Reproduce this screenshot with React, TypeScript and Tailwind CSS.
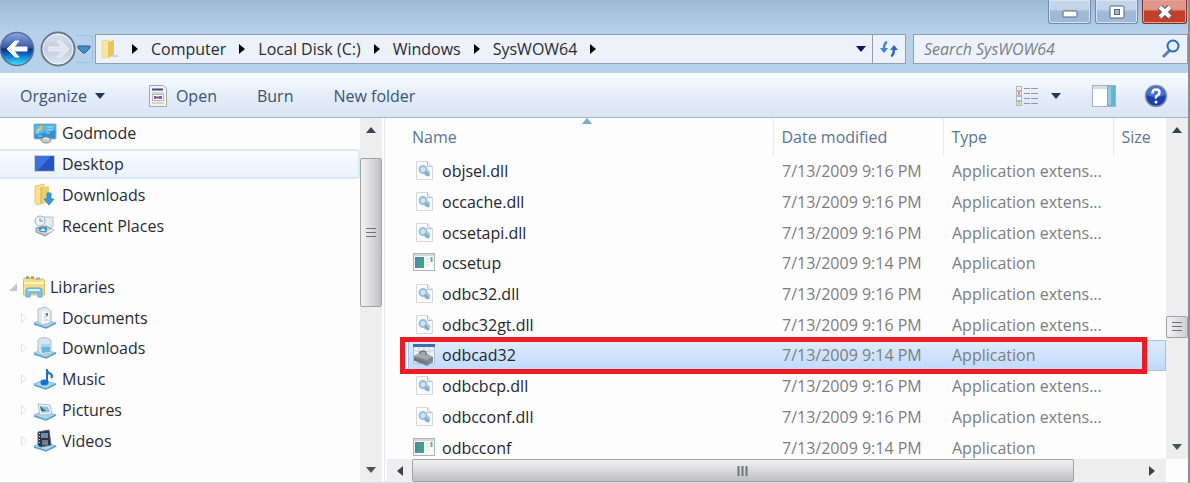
import type { ReactNode } from "react";

const crumbs = ["Computer", "Local Disk (C:)", "Windows", "SysWOW64"];

const favorites = [
  { name: "Godmode", icon: <GodmodeIcon /> },
  { name: "Desktop", icon: <DesktopIcon />, active: true },
  { name: "Downloads", icon: <DownloadFolderIcon /> },
  { name: "Recent Places", icon: <RecentIcon /> },
];

const libraries = [
  { name: "Documents", icon: <DocumentsIcon /> },
  { name: "Downloads", icon: <LibraryDownloadsIcon /> },
  { name: "Music", icon: <MusicIcon /> },
  { name: "Pictures", icon: <PicturesIcon /> },
  { name: "Videos", icon: <VideosIcon /> },
];

const files = [
  { name: "objsel.dll", date: "7/13/2009 9:16 PM", kind: "dll" },
  { name: "occache.dll", date: "7/13/2009 9:16 PM", kind: "dll" },
  { name: "ocsetapi.dll", date: "7/13/2009 9:16 PM", kind: "dll" },
  { name: "ocsetup", date: "7/13/2009 9:14 PM", kind: "exe" },
  { name: "odbc32.dll", date: "7/13/2009 9:16 PM", kind: "dll" },
  { name: "odbc32gt.dll", date: "7/13/2009 9:16 PM", kind: "dll" },
  { name: "odbcad32", date: "7/13/2009 9:14 PM", kind: "odbc", selected: true },
  { name: "odbcbcp.dll", date: "7/13/2009 9:16 PM", kind: "dll" },
  { name: "odbcconf.dll", date: "7/13/2009 9:16 PM", kind: "dll" },
  { name: "odbcconf", date: "7/13/2009 9:14 PM", kind: "exe" },
];

function Triangle({
  dir,
  className,
}: {
  dir: "up" | "down" | "left" | "right";
  className?: string;
}) {
  const box = {
    up: "0 0 10 6",
    down: "0 0 10 6",
    left: "0 0 6 10",
    right: "0 0 6 10",
  };
  const d = {
    up: "M0 6 5 0l5 6z",
    down: "M0 0h10L5 6z",
    left: "M6 0v10L0 5z",
    right: "M0 0v10l6-5z",
  };
  const size = dir === "up" || dir === "down" ? "h-[6px] w-[10px]" : "h-[10px] w-[6px]";
  return (
    <svg viewBox={box[dir]} className={`${size} shrink-0 ${className ?? ""}`} fill="currentColor">
      <path d={d[dir]} />
    </svg>
  );
}

function GodmodeIcon() {
  return (
    <svg viewBox="0 0 24 24" className="size-6">
      <rect x="1" y="3" width="22" height="15" rx="1" fill="#2f8fd0" stroke="#8abadd" />
      <path d="M2 4h20v5L2 14z" fill="#5db4e6" />
      <path d="M5 13a3 3 0 1 1 4-4l-3 1z" fill="#bcd9a0" />
      <circle cx="8" cy="6.500" r="2" fill="#f3b83e" />
      <path d="M14 6h6M14 9h6M13 12h4M5 15h4" stroke="#a9dcf4" />
      <ellipse cx="13" cy="19" rx="5" ry="3" fill="#c4c9ce" stroke="#858e97" />
      <path d="M10 18q3-3 6 0z" fill="#eef0f2" />
    </svg>
  );
}

function DesktopIcon() {
  return (
    <svg viewBox="0 0 24 24" className="size-6">
      <rect x="1" y="3" width="21" height="17" fill="#c5cedb" />
      <rect x="2" y="4" width="19" height="14" fill="#2354c4" />
      <path d="M2 4h16L5 18H2z" fill="#3f72dc" />
      <path d="M2 18.500h19" stroke="#5a6a86" />
    </svg>
  );
}

function DownloadFolderIcon() {
  return (
    <svg viewBox="0 0 24 24" className="size-6">
      <path d="M2 3 11 1v19l-7 2-2-2z" fill="#f8e292" stroke="#e6c974" />
      <path d="M8 4l8-1v16l-8 2z" fill="#edcf70" />
      <path d="M8 4v17" stroke="#d4ae52" />
      <path d="M14 10h4v6h3l-5 6-5-6h3z" fill="#2d9be0" stroke="#3b8cc4" />
    </svg>
  );
}

function RecentIcon() {
  return (
    <svg viewBox="0 0 24 24" className="size-6">
      <path d="M9 3h11v9l-3 4H8z" fill="#e3ecf2" stroke="#b3c0ca" />
      <circle cx="7" cy="7" r="5" fill="#eef3f6" stroke="#a3b0bb" />
      <path d="M7 4v3h3" fill="none" stroke="#7c8e9e" />
      <path d="M3 14l10-2 8 4-9 6-9-4z" fill="#c2c9cf" stroke="#8a959e" />
      <path d="M5 13h9v5H7z" fill="#4b93bd" />
      <path d="M7 17l3-3 3 3z" fill="#d4f1f5" />
      <path d="M14 18l6-2" stroke="#eef2f4" strokeWidth="2" />
    </svg>
  );
}

function LibrariesIcon() {
  return (
    <svg viewBox="0 0 24 24" className="size-6">
      <path d="M1.500 5q0-2 2-2h6l2 1h9q2 0 2 2v14h-21z" fill="#f4dc88" stroke="#dcbc66" />
      <path d="M2 8h20" stroke="#fff3b8" strokeWidth="2" />
      <path d="M4 2.500h3" stroke="#5fae5c" strokeWidth="2" />
      <path d="M9 2.500h3" stroke="#d96a5d" strokeWidth="2" />
      <path d="M14 3.500h4" stroke="#7fb0da" strokeWidth="2" />
      <path d="M4 22v-7q0-2 2-2h12q2 0 2 2v7h-4v-4H8v4z" fill="#7cc5ea" stroke="#62abd3" />
      <path d="M6 15h12" stroke="#d6f2ff" strokeWidth="2" />
    </svg>
  );
}

function LibraryBase({ children }: { children: ReactNode }) {
  return (
    <svg viewBox="0 0 24 24" className="size-6">
      <path d="M1 17l9-4 13 4-10 5z" fill="#a5d8f2" stroke="#84bfdf" />
      <path d="M1 18l12 4 10-5" fill="none" stroke="#5ba3cc" strokeWidth="1.500" />
      {children}
    </svg>
  );
}

function DocumentsIcon() {
  return (
    <LibraryBase>
      <path d="M5 3l8-2 5 4v12l-9 2-4-3z" fill="#e3e9ef" stroke="#b3bfca" />
      <path d="M9 5l7 1v10l-7 2z" fill="#f8fafc" />
      <path d="M11 8h4M11 11h3M11 14h4" stroke="#b3c0cf" />
      <rect x="13" y="7" width="2" height="3" fill="#478fc5" />
    </LibraryBase>
  );
}

function LibraryDownloadsIcon() {
  return (
    <LibraryBase>
      <path d="M5 4q5-5 13 0v13l-9 2-4-3z" fill="#dae4ec" stroke="#b0bdc9" />
      <path d="M8 8h9v8l-8 1z" fill="#6ab6e2" />
      <path d="M8 8h9v3H8z" fill="#a4d8f1" />
    </LibraryBase>
  );
}

function MusicIcon() {
  return (
    <LibraryBase>
      <ellipse cx="11.500" cy="15.500" rx="4" ry="3" fill="#1a72c8" />
      <path d="M14 16V2q0 4 4 5 2 2 0 4" fill="none" stroke="#1a72c8" strokeWidth="2" />
    </LibraryBase>
  );
}

function PicturesIcon() {
  return (
    <LibraryBase>
      <path d="M5 6l12 1 2 9-12 1z" fill="#f0f5f9" stroke="#aebecc" />
      <path d="M7 8l8 1 2 5-8 1z" fill="#8fc1dc" />
      <path d="M8 13l-1-5 6 5z" fill="#2d7d66" />
    </LibraryBase>
  );
}

function VideosIcon() {
  return (
    <LibraryBase>
      <path d="M5 3l11-2 2 15-11 2-2-2z" fill="#283447" stroke="#59687a" />
      <path d="M8 4h7v5H8z" fill="#5a94bb" />
      <path d="M9 11h6v5H9z" fill="#4a83ac" />
      <path d="M9 8h4M11 14h4" stroke="#c86c3e" strokeWidth="2" />
      <path d="M6.500 4v12" stroke="#d6dde4" strokeDasharray="1 2" />
    </LibraryBase>
  );
}

function FileIcon({ kind }: { kind: string }) {
  if (kind === "exe") {
    return (
      <svg viewBox="0 0 24 24" className="size-6 shrink-0">
        <rect x="1.500" y="2.500" width="21" height="17" fill="#f6f7f8" stroke="#aeb4b9" />
        <path d="M2 4h20" stroke="#d3d8dc" strokeWidth="2" />
        <rect x="3" y="6" width="9" height="11" fill="#4a86b4" />
        <path d="M6 7h6v10H5z" fill="#45a07e" />
        <path d="M14 8h3M14 11h3M14 14h3" stroke="#d6dadd" />
        <path d="M19.500 6v5" stroke="#6fae94" strokeWidth="2" />
      </svg>
    );
  }
  if (kind === "odbc") {
    return (
      <svg viewBox="0 0 24 24" className="size-6 shrink-0">
        <rect x="1.500" y="1.500" width="21" height="19" fill="#eef2f7" stroke="#b3bfce" />
        <path d="M1 2.500h22" stroke="#3a6cbb" strokeWidth="3" />
        <path d="M7 4v8M12 4v8M17 4v8M2 8h20" stroke="#c5d0de" />
        <path d="M2 13l8-4 3 1 8 4v5l-6 4-13-5z" fill="#7e868e" />
        <path d="M2 13l8-4 10 5-5 3z" fill="#a2a9b0" />
        <path d="M8 11V9l3-1 3 1v3" fill="none" stroke="#71797f" strokeWidth="1.500" />
        <path d="M2 16l13 4" stroke="#5f676e" />
      </svg>
    );
  }
  return (
    <svg viewBox="0 0 24 24" className="size-6 shrink-0">
      <path d="M4.500 2.500h11l5 5v13h-16z" fill="#fafbfc" stroke="#d3d8dc" />
      <path d="M15.500 2.500v5h5" fill="#edf0f2" stroke="#b9c1c8" />
      <circle cx="11" cy="10.500" r="3.500" fill="#d3e6f3" stroke="#9bbfda" strokeWidth="2" />
      <circle cx="15" cy="14" r="3" fill="#a3c3db" />
      <path d="M13 13l4 4" stroke="#7ea6c6" strokeWidth="2" />
    </svg>
  );
}

function TitleBar() {
  return (
    <div className="flex h-6 justify-end gap-1 pr-px">
      <button
        aria-label="Minimize"
        className="flex w-[43px] items-center justify-center rounded-b-[3px] border border-t-0 border-[#6f8bad] bg-linear-to-b from-[#c3d5e9] from-40% to-[#9fb9d6] to-50% pt-1 shadow-[inset_0_0_0_1px_#d5e3f2]"
      >
        <svg viewBox="0 0 16 8" className="h-2 w-4">
          <rect x="1" y="1" width="14" height="6" rx="1" fill="#fff" stroke="#5c6370" />
        </svg>
      </button>
      <button
        aria-label="Maximize"
        className="flex w-[43px] items-center justify-center rounded-b-[3px] border border-t-0 border-[#6f8bad] bg-linear-to-b from-[#c3d5e9] from-40% to-[#9fb9d6] to-50% shadow-[inset_0_0_0_1px_#d5e3f2]"
      >
        <svg viewBox="0 0 16 14" className="h-[14px] w-4">
          <rect x="1" y="1" width="14" height="12" rx="1" fill="#fff" stroke="#5c6370" />
          <rect x="5.500" y="4.500" width="5" height="5" fill="#9eb8d4" stroke="#5c6370" />
        </svg>
      </button>
      <button
        aria-label="Close"
        className="flex w-[45px] items-center justify-center rounded-b-[3px] border border-t-0 border-[#7c2f2b] bg-linear-to-b from-[#e0978a] from-40% to-[#c0402b] to-50% shadow-[inset_0_0_0_1px_#e3a498]"
      >
        <svg viewBox="0 0 16 14" className="h-[14px] w-4">
          <path d="M3 2l10 10M13 2L3 12" stroke="#5e4a52" strokeWidth="6" />
          <path d="M3 2l10 10M13 2L3 12" stroke="#fff" strokeWidth="4" />
        </svg>
      </button>
    </div>
  );
}

function NavButtons() {
  return (
    <div className="flex h-9 shrink-0 items-center">
      <button aria-label="Back" className="size-9">
        <svg viewBox="0 0 36 36" className="size-9">
          <defs>
            <linearGradient id="back" x2="0" y2="1">
              <stop offset="0" stopColor="#8fa9e0" />
              <stop offset="0.450" stopColor="#3659ad" />
              <stop offset="0.500" stopColor="#0b2c86" />
              <stop offset="0.700" stopColor="#1476c8" />
              <stop offset="1" stopColor="#3ce8fb" />
            </linearGradient>
          </defs>
          <circle cx="17" cy="18" r="16.500" fill="url(#back)" stroke="#5a7196" strokeWidth="1.500" />
          <path
            d="M7 18l8-8h4l-5 6h13v4H14l5 6h-4z"
            fill="#fff"
            stroke="#fff"
            strokeLinejoin="round"
          />
        </svg>
      </button>
      <button aria-label="Forward" className="ml-1 size-9">
        <svg viewBox="0 0 36 36" className="size-9">
          <defs>
            <linearGradient id="fwd" x2="0" y2="1">
              <stop offset="0" stopColor="#d9e3ee" />
              <stop offset="0.500" stopColor="#bfcddd" />
              <stop offset="1" stopColor="#dce9f5" />
            </linearGradient>
          </defs>
          <circle cx="18" cy="18" r="16.500" fill="url(#fwd)" stroke="#6b7787" strokeWidth="2" />
          <circle cx="18" cy="18" r="15" fill="none" stroke="#eef3f8" />
          <path
            d="M29 18l-8-8h-4l5 6H9v4h13l-5 6h4z"
            fill="#dde6ef"
            stroke="#eaf0f6"
            strokeLinejoin="round"
          />
        </svg>
      </button>
      <button
        aria-label="Recent pages"
        className="flex h-7 w-[17px] items-center justify-center rounded-r-[3px] border border-l-0 border-[#a5bfdb]"
      >
        <svg viewBox="0 0 14 10" className="h-[10px] w-[14px] shrink-0">
          <path d="M1 2h12v2l-5 5H6L1 4z" fill="#3f8fc8" stroke="#2b5a8c" />
        </svg>
      </button>
    </div>
  );
}

function AddressBar() {
  return (
    <div className="mt-[7px] flex items-center">
      <NavButtons />
      <nav
        aria-label="Address"
        className="ml-[2px] flex h-[30px] min-w-0 flex-1 items-center gap-[13px] border border-[#8f9fb3] bg-[#ebf2fb] pl-[5px] text-[#2b2b33]"
      >
        <svg viewBox="0 0 18 20" className="h-5 w-[18px] shrink-0">
          <path d="M1 2l7-1v16l-5 2-2-1z" fill="#f8e5a0" stroke="#f0d88c" />
          <path d="M7 3l6-2v15l-6 3z" fill="#e8c65c" />
          <path d="M13 16h4v2h-6" fill="#cfd3d6" />
        </svg>
        <Triangle dir="right" className="text-black" />
        {crumbs.map((crumb) => (
          <span key={crumb} className="flex shrink-0 items-center gap-[13px]">
            <a href="#path">{crumb}</a>
            <Triangle dir="right" className="text-black" />
          </span>
        ))}
        <button aria-label="Previous locations" className="mr-[2px] ml-auto p-1 text-[#10105c]">
          <Triangle dir="down" />
        </button>
      </nav>
      <button
        aria-label="Refresh"
        className="flex h-[30px] w-[33px] items-center justify-center border border-l-0 border-[#8f9fb3] bg-[#ebf2fb]"
      >
        <svg viewBox="0 0 20 18" className="h-[18px] w-5">
          <path d="M8 2Q5 3 5 9" fill="none" stroke="#3a8bd2" strokeWidth="2.500" />
          <path d="M1 8h8l-4 5z" fill="#3a8bd2" />
          <path d="M12 16q3-1 3-7" fill="none" stroke="#2c6cb8" strokeWidth="2.500" />
          <path d="M11 10h8l-4-5z" fill="#2c6cb8" />
        </svg>
      </button>
      <label className="ml-[7px] flex h-[30px] w-[275px] items-center border border-[#8f9fb3] bg-[#ebf2fb] pr-1.5 pl-[10px]">
        <input
          type="text"
          aria-label="Search SysWOW64"
          placeholder="Search SysWOW64"
          className="min-w-0 flex-1 bg-transparent italic outline-none placeholder:text-[#7c7f84]"
        />
        <svg viewBox="0 0 20 20" className="size-5" fill="none">
          <path d="M9 11l-7 7" stroke="#5b7fae" strokeWidth="3" />
          <circle cx="12" cy="7" r="5.500" fill="#e4f1fc" stroke="#2a6abf" strokeWidth="2" />
        </svg>
      </label>
    </div>
  );
}

function Toolbar() {
  return (
    <div className="flex h-[45px] shrink-0 items-center border-b border-[#a6b7cd] bg-linear-to-b from-[#fafdff] via-[#e4edf9] via-50% to-[#dae5f4] pt-[2px] text-[#3b5375]">
      <button className="ml-5 flex items-center gap-2">
        Organize
        <Triangle dir="down" className="text-[#1e3a62]" />
      </button>
      <button className="ml-[43px] flex items-center gap-2">
        <svg viewBox="0 0 20 22" className="h-[22px] w-5">
          <path d="M1.500.500h14l3 3v18h-17z" fill="#f3f3f1" stroke="#a5a8ab" />
          <path d="M4 4.500h11" stroke="#42478c" strokeWidth="2" />
          <path d="M4 8h12M4 18h12" stroke="#b0b4ba" />
          <rect x="4.500" y="9.500" width="11" height="6" fill="#fff" stroke="#b2b6ba" />
          <path d="M6 12.500h2" stroke="#d04a4a" strokeWidth="3" />
          <path d="M8 12.500h3" stroke="#4468c8" strokeWidth="2" />
          <path d="M11 12.500h3" stroke="#9b4cb8" strokeWidth="3" />
        </svg>
        Open
      </button>
      <button className="ml-10">Burn</button>
      <button className="ml-10">New folder</button>
      <button aria-label="Change your view" className="ml-auto">
        <svg viewBox="0 0 24 22" className="h-[22px] w-6">
          <g fill="#eef3f0" stroke="#b0b8be">
            <rect x="1.500" y="1.500" width="5" height="4" />
            <rect x="1.500" y="6.500" width="5" height="4" />
            <rect x="1.500" y="11.500" width="5" height="4" />
            <rect x="1.500" y="16.500" width="5" height="4" />
          </g>
          <path d="M3 8.500h2" stroke="#d8604e" strokeWidth="2" />
          <path d="M3 18.500h2" stroke="#a8bf4a" strokeWidth="2" />
          <path
            d="M9 3.500h6M16 3.500h7M9 8.500h6M16 8.500h7M9 13.500h6M16 13.500h7M9 18.500h6M16 18.500h7"
            stroke="#8c99ad"
          />
        </svg>
      </button>
      <button aria-label="More options" className="ml-2 p-1 text-[#1e3a62]">
        <Triangle dir="down" />
      </button>
      <button aria-label="Show the preview pane" className="ml-[27px]">
        <svg viewBox="0 0 24 22" className="h-[22px] w-6">
          <rect x=".500" y=".500" width="23" height="21" fill="#fff" stroke="#a3b2c2" />
          <path d="M1 2.500h15" stroke="#d3dde8" strokeWidth="3" />
          <rect x="15" y="1" width="8" height="20" fill="#68b2d0" />
          <rect x="16" y="2" width="3" height="18" fill="#93cde2" />
        </svg>
      </button>
      <button aria-label="Get help" className="mr-5 ml-7">
        <svg viewBox="0 0 24 24" className="size-6">
          <circle cx="12" cy="12" r="10.500" fill="#1c3fb0" stroke="#8792a8" strokeWidth="1.500" />
          <path d="M3 11a9 9 0 0 1 18 0q-9 4-18 0z" fill="#4a70d4" />
          <path
            d="M8.500 9.500q0-4 3.500-4t3.500 3q0 2-2 3t-1.500 3"
            fill="none"
            stroke="#fff"
            strokeWidth="2.500"
          />
          <circle cx="12" cy="18" r="1.500" fill="#fff" />
        </svg>
      </button>
    </div>
  );
}

function NavigationPane() {
  return (
    <nav aria-label="Folders" className="min-w-0 flex-1 bg-[#fdfdfe]">
      <ul className="grid h-[338px] grid-rows-11 text-[#2a2a30]">
        {favorites.map((item) => (
          <li
            key={item.name}
            className={
              item.active
                ? "rounded-r-[3px] border-2 border-l-0 border-[#d9e9fb] bg-linear-to-b from-[#fafcff] to-[#e9f2fd]"
                : "border-y-2 border-transparent"
            }
          >
            <a href="#folder" className="flex h-full items-center gap-[5px] pl-[33px]">
              {item.icon}
              {item.name}
            </a>
          </li>
        ))}
        <li aria-hidden="true" />
        <li>
          <a href="#libraries" className="flex h-full items-center gap-1 pl-2">
            <svg viewBox="0 0 10 10" className="size-[10px]">
              <path d="M9 1v8H1z" fill="#c3c7cb" />
            </svg>
            <LibrariesIcon />
            Libraries
          </a>
        </li>
        {libraries.map((item) => (
          <li key={item.name}>
            <a href="#library" className="flex h-full items-center gap-[5px] pl-5">
              <svg viewBox="0 0 8 12" className="h-3 w-2">
                <path d="M1.500 1.500v9l5-4.500z" fill="none" stroke="#dfe2e5" />
              </svg>
              {item.icon}
              {item.name}
            </a>
          </li>
        ))}
      </ul>
    </nav>
  );
}

function FileTable() {
  return (
    <div className="min-h-0 flex-1 overflow-hidden pl-[21px]">
      <table className="h-[345px] w-full table-fixed text-left text-[#7d7d7d]">
        <thead>
          <tr className="h-[38px] text-[#5b7494]">
            <th className="relative pl-1 font-normal">
              Name
              <span className="absolute top-0 left-[174px] text-[#6fb0d0]">
                <Triangle dir="up" className="block" />
              </span>
            </th>
            <th className="w-[170px] border-l border-[#e3ecf6] pl-2 font-normal">Date modified</th>
            <th className="w-[170px] border-l border-[#e3ecf6] pl-2 font-normal">Type</th>
            <th className="w-[53px] border-l border-[#e3ecf6] pl-2 font-normal">Size</th>
          </tr>
        </thead>
        <tbody>
          {files.map((file) => (
            <tr
              key={file.name}
              className={
                file.selected
                  ? "relative bg-linear-to-b from-[#dfecfd] to-[#bfd9fb] shadow-[inset_0_0_0_1px_#a3c4ea]"
                  : ""
              }
            >
              <td className="p-0 pl-1 text-[#26262c]">
                <span className="flex items-center gap-1.5">
                  <FileIcon kind={file.kind} />
                  {file.name}
                </span>
                {file.selected && (
                  <span className="absolute -top-[3px] right-[19px] -bottom-[3px] -left-2 border-[5px] border-[#ed1c24]" />
                )}
              </td>
              <td className="p-0 pl-[9px]">{file.date}</td>
              <td className="p-0 pl-[9px]">
                {file.kind === "dll" ? "Application extens..." : "Application"}
              </td>
              <td />
            </tr>
          ))}
        </tbody>
      </table>
    </div>
  );
}

function Grip() {
  return (
    <svg viewBox="0 0 10 12" className="h-3 w-[10px]">
      <path d="M0 1.500h10M0 5.500h10M0 9.500h10" stroke="#71757a" />
    </svg>
  );
}

function VerticalScrollbar({ children }: { children: ReactNode }) {
  return (
    <div className="flex min-h-0 flex-1 flex-col bg-[#eeeeef]">
      <button aria-label="Scroll up" className="flex h-6 items-center justify-center text-[#3f4347]">
        <Triangle dir="up" />
      </button>
      {children}
      <button
        aria-label="Scroll down"
        className="mt-auto flex h-6 items-center justify-center text-[#4d5156]"
      >
        <Triangle dir="down" />
      </button>
    </div>
  );
}

function HorizontalScrollbar() {
  return (
    <div className="flex h-[23px] bg-[#eeeeef]">
      <button
        aria-label="Scroll left"
        className="flex w-[25px] items-center justify-center text-[#3f4347]"
      >
        <Triangle dir="left" />
      </button>
      <div className="flex w-[85%] items-center justify-center rounded-[2px] border border-[#a2a2a4] bg-linear-to-b from-[#f3f3f4] via-[#d9d9db] to-[#bebec1]">
        <svg viewBox="0 0 12 10" className="h-[10px] w-3">
          <path d="M1.500 0v10M5.500 0v10M9.500 0v10" stroke="#71757a" strokeWidth="2" />
        </svg>
      </div>
      <button
        aria-label="Scroll right"
        className="ml-auto flex w-7 items-center justify-center text-[#3f4347]"
      >
        <Triangle dir="right" />
      </button>
    </div>
  );
}

export default function App() {
  return (
    <div className="flex h-screen flex-col overflow-hidden border-r-2 border-[#8b8f94] bg-[#fdfdfe] font-['Open_Sans',sans-serif] text-base leading-6">
      <header className="h-[73px] shrink-0 bg-linear-to-b from-[#9fb9d5] to-[#b8d1ea] to-45%">
        <TitleBar />
        <AddressBar />
      </header>
      <Toolbar />
      <main className="flex min-h-0 flex-1 border-b border-[#cfdfee]">
        <aside className="flex w-[385px] shrink-0 border-r border-[#dfe9f8]">
          <NavigationPane />
          <div className="mr-[2px] flex w-[22px] flex-col">
            <VerticalScrollbar>
              <div className="mt-4 flex h-[149px] items-center justify-center rounded-[2px] border border-[#a2a2a4] bg-linear-to-r from-[#f3f3f4] via-[#dcdcde] to-[#c0c0c3]">
                <Grip />
              </div>
            </VerticalScrollbar>
          </div>
        </aside>
        <section className="ml-[2px] flex min-w-0 flex-1 flex-col">
          <div className="flex min-h-0 flex-1">
            <div className="flex min-w-0 flex-1 flex-col">
              <FileTable />
            </div>
            <div className="flex w-[22px] flex-col">
              <VerticalScrollbar>
                <div className="mt-[174px] flex h-[22px] items-center justify-center rounded-[2px] border border-[#a2a2a4] bg-linear-to-r from-[#f3f3f4] to-[#cfcfd2]">
                  <Grip />
                </div>
              </VerticalScrollbar>
            </div>
          </div>
          <div className="pr-[22px]">
            <HorizontalScrollbar />
          </div>
        </section>
      </main>
    </div>
  );
}
